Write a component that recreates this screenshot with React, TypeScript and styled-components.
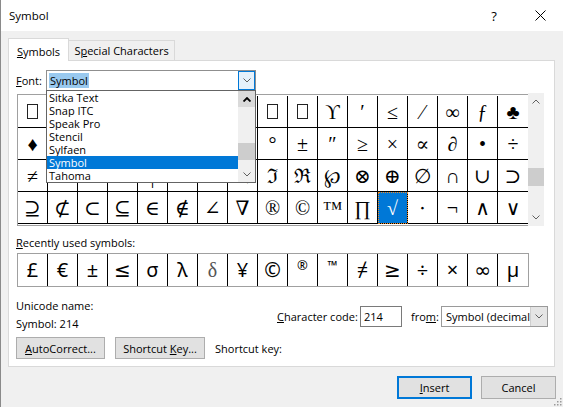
import React from "react";
import styled, { createGlobalStyle, css } from "styled-components";

const uiFont = `"Open Sans", "Noto Sans", "DejaVu Sans", sans-serif`;
const symbolFont = `"Liberation Serif", "DejaVu Serif", serif`;

const GlobalStyle = createGlobalStyle`
  html, body { margin: 0; padding: 0; background: #f0f0f0; }
  body { font-family: ${uiFont}; font-size: 11px; color: #000; }
  * { box-sizing: border-box; }
`;

// null = glyph missing from the font (drawn as an empty box)
const symbolRows: (string | null)[][] = [
  [null, null, null, null, null, null, null, null, null, null, "ϒ", "′", "≤", "⁄", "∞", "ƒ", "♣"],
  ["♦", "♥", "♠", "↔", "←", "↑", "→", "↓", "°", "±", "″", "≥", "×", "∝", "∂", "•", "÷"],
  ["≠", "≡", "≈", "…", "|", "—", "↵", "ℵ", "ℑ", "ℜ", "℘", "⊗", "⊕", "∅", "∩", "∪", "⊃"],
  ["⊇", "⊄", "⊂", "⊆", "∈", "∉", "∠", "∇", "®", "©", "™", "∏", "√", "⋅", "¬", "∧", "∨"],
];

const selected = { row: 3, col: 12 };

const fontList = ["Sitka Text", "Snap ITC", "Speak Pro", "Stencil", "Sylfaen", "Symbol", "Tahoma"];

const recent: { ch: string; kind?: "serif" | "raised" }[] = [
  { ch: "£" }, { ch: "€" }, { ch: "±" }, { ch: "≤" }, { ch: "σ" }, { ch: "λ" },
  { ch: "δ", kind: "serif" }, { ch: "¥" }, { ch: "©" }, { ch: "®", kind: "raised" },
  { ch: "™", kind: "raised" }, { ch: "≠" }, { ch: "≥" }, { ch: "÷" }, { ch: "×" },
  { ch: "∞" }, { ch: "µ" },
];

const Chevron = ({ up, bold }: { up?: boolean; bold?: boolean }) => (
  <svg width="8" height="5" viewBox="0 0 8 5">
    <polyline
      points={up ? "0.5,4.5 4,1 7.5,4.5" : "0.5,0.5 4,4 7.5,0.5"}
      fill="none"
      stroke={bold ? "#000" : "#606060"}
      strokeWidth={bold ? 1.8 : 1}
    />
  </svg>
);

export default function App() {
  return (
    <>
      <GlobalStyle />
      <Window>
        <TitleBar>
          <Title>Symbol</Title>
          <CaptionButton>?</CaptionButton>
          <CaptionButton>
            <svg width="11" height="11" viewBox="0 0 11 11">
              <path d="M0.5 0.5 L10.5 10.5 M10.5 0.5 L0.5 10.5" stroke="#000" strokeWidth="1" />
            </svg>
          </CaptionButton>
        </TitleBar>

        <Body>
          <TabStrip>
            <Tab $active>
              <span>
                <u>S</u>ymbols
              </span>
            </Tab>
            <Tab>
              <span>
                S<u>p</u>ecial Characters
              </span>
            </Tab>
          </TabStrip>

          <Panel>
            <FontRow>
              <FieldLabel>
                <u>F</u>ont:
              </FieldLabel>
              <ComboWrap>
                <Combo>
                  <ComboText>
                    <Highlight>Symbol</Highlight>
                  </ComboText>
                  <ComboButton>
                    <Chevron />
                  </ComboButton>
                </Combo>
                <DropList>
                  <DropItems>
                    {fontList.map((f) => (
                      <DropItem key={f} $active={f === "Symbol"}>
                        {f}
                      </DropItem>
                    ))}
                  </DropItems>
                  <ScrollBar $w={17}>
                    <ScrollArrow $h={16} $hover>
                      <Chevron up bold />
                    </ScrollArrow>
                    <Spacer $h={36} />
                    <ScrollThumb $h={17} />
                    <Spacer $grow />
                    <ScrollArrow $h={16}>
                      <Chevron />
                    </ScrollArrow>
                  </ScrollBar>
                </DropList>
              </ComboWrap>
            </FontRow>

            <GridArea>
              <SymbolGrid>
                {symbolRows.map((row, r) =>
                  row.map((ch, c) => (
                    <SymbolCell
                      key={`${r}-${c}`}
                      $selected={r === selected.row && c === selected.col}
                    >
                      {ch === null ? <MissingGlyph /> : ch}
                    </SymbolCell>
                  ))
                )}
              </SymbolGrid>
              <ScrollBar $w={16}>
                <ScrollArrow $h={17}>
                  <Chevron up />
                </ScrollArrow>
                <Spacer $h={58} />
                <ScrollThumb $h={18} />
                <Spacer $grow />
                <ScrollArrow $h={17}>
                  <Chevron />
                </ScrollArrow>
              </ScrollBar>
            </GridArea>

            <SectionLabel>
              <u>R</u>ecently used symbols:
            </SectionLabel>
            <RecentRow>
              {recent.map((s, i) => (
                <RecentCell key={i} $kind={s.kind}>
                  {s.ch}
                </RecentCell>
              ))}
            </RecentRow>

            <InfoRow>
              <InfoText>
                <div>Unicode name:</div>
                <div>Symbol: 214</div>
              </InfoText>
              <CodeGroup>
                <CodeLabel $w={83}>
                  <u>C</u>haracter code:
                </CodeLabel>
                <TextInput>214</TextInput>
                <CodeLabel $w={30} style={{ marginLeft: 9 }}>
                  fro<u>m</u>:
                </CodeLabel>
                <Select>
                  <SelectText>Symbol (decimal)</SelectText>
                  <SelectButton>
                    <Chevron />
                  </SelectButton>
                </Select>
              </CodeGroup>
            </InfoRow>

            <ButtonRow>
              <PushButton $w={89} $h={22}>
                <span>
                  <u>A</u>utoCorrect...
                </span>
              </PushButton>
              <PushButton $w={90} $h={22}>
                <span>
                  Shortcut <u>K</u>ey...
                </span>
              </PushButton>
              <span>Shortcut key:</span>
            </ButtonRow>
          </Panel>

          <Footer>
            <PushButton $w={75} $h={23} $primary>
              <span>
                <u>I</u>nsert
              </span>
            </PushButton>
            <PushButton $w={75} $h={23}>
              <span>Cancel</span>
            </PushButton>
          </Footer>
        </Body>

        <Grip width="10" height="10" viewBox="0 0 10 10">
          {[
            [8, 2], [8, 5], [8, 8], [5, 5], [5, 8], [2, 8],
          ].map(([x, y]) => (
            <rect key={`${x}${y}`} x={x} y={y} width="1.5" height="1.5" fill="#9a9a9a" />
          ))}
        </Grip>
      </Window>
    </>
  );
}

const Window = styled.div`
  position: relative;
  width: 563px;
  height: 407px;
  overflow: hidden;
  background: #f0f0f0;
  border-left: 1px solid #8a8a8a;
`;

const TitleBar = styled.div`
  display: flex;
  align-items: center;
  height: 31px;
  padding-left: 8px;
  background: #fff;
`;

const Title = styled.div`
  flex: 1;
  font-size: 11.5px;
`;

const CaptionButton = styled.div`
  display: flex;
  align-items: center;
  justify-content: center;
  width: 46px;
  height: 31px;
  font-size: 13px;
`;

const Body = styled.div`
  padding-left: 7px;
`;

const TabStrip = styled.div`
  display: flex;
  align-items: flex-end;
  height: 29px;
`;

const Tab = styled.div<{ $active?: boolean }>`
  position: relative;
  display: flex;
  align-items: center;
  justify-content: center;
  border: 1px solid #d9d9d9;
  border-bottom: none;
  white-space: nowrap;
  ${(p) =>
    p.$active
      ? css`
          z-index: 1;
          width: 61px;
          height: 23px;
          margin-bottom: -1px;
          padding-top: 2px;
          background: #fff;
        `
      : css`
          width: 107px;
          height: 20px;
          margin-left: -1px;
          background: #f0f0f0;
        `}
`;

const Panel = styled.div`
  width: 547px;
  height: 307px;
  background: #fff;
  border: 1px solid #d9d9d9;
`;

const FontRow = styled.div`
  display: flex;
  align-items: center;
  margin: 9px 0 0 7px;
  height: 21px;
`;

const FieldLabel = styled.div`
  width: 30px;
`;

const ComboWrap = styled.div`
  position: relative;
  width: 210px;
  height: 21px;
`;

const Combo = styled.div`
  display: flex;
  height: 21px;
  border: 1px solid #8f8f8f;
  background: #fff;
`;

const ComboText = styled.div`
  flex: 1;
  display: flex;
  align-items: center;
  padding-left: 2px;
`;

const Highlight = styled.span`
  background: #99c9ef;
  padding: 0 1px;
  line-height: 15px;
`;

const ComboButton = styled.div`
  display: flex;
  align-items: center;
  justify-content: center;
  width: 17px;
  border: 1px solid #0078d7;
  background: #e5f1fb;
`;

const DropList = styled.div`
  position: absolute;
  z-index: 5;
  left: 0;
  top: 20px;
  display: flex;
  width: 210px;
  height: 93px;
  border: 1px solid #646464;
  background: #fff;
`;

const DropItems = styled.div`
  flex: 1;
`;

const DropItem = styled.div<{ $active?: boolean }>`
  height: 13px;
  line-height: 13px;
  padding-left: 2px;
  white-space: nowrap;
  overflow: hidden;
  ${(p) =>
    p.$active &&
    css`
      background: #0078d7;
      color: #fff;
    `}
`;

const ScrollBar = styled.div<{ $w: number }>`
  display: flex;
  flex-direction: column;
  width: ${(p) => p.$w}px;
  background: #f0f0f0;
`;

const ScrollArrow = styled.div<{ $h: number; $hover?: boolean }>`
  display: flex;
  align-items: center;
  justify-content: center;
  height: ${(p) => p.$h}px;
  background: ${(p) => (p.$hover ? "#dadada" : "transparent")};
`;

const ScrollThumb = styled.div<{ $h: number }>`
  height: ${(p) => p.$h}px;
  background: #cdcdcd;
`;

const Spacer = styled.div<{ $h?: number; $grow?: boolean }>`
  height: ${(p) => (p.$h ? `${p.$h}px` : "auto")};
  flex: ${(p) => (p.$grow ? 1 : "none")};
`;

const GridArea = styled.div`
  display: flex;
  height: 133px;
  margin: 2px 0 0 8px;
`;

const SymbolGrid = styled.div`
  display: grid;
  grid-template-columns: repeat(17, 30px);
  grid-auto-rows: 32px;
  align-self: flex-start;
  margin: 1px -1px 0 0;
  padding: 1px 0;
  border: 1px solid #a0a0a0;
  background: #fff;
`;

const SymbolCell = styled.div<{ $selected?: boolean }>`
  display: flex;
  align-items: center;
  justify-content: center;
  border-right: 1px solid #000;
  border-bottom: 1px solid #000;
  font-family: ${symbolFont};
  font-size: 20px;
  line-height: 1;
  &:nth-child(17n) {
    border-right: none;
  }
  ${(p) =>
    p.$selected &&
    css`
      background: #0078d7;
      color: #fff;
      outline: 1px dotted #f08a24;
      outline-offset: -1px;
    `}
`;

const MissingGlyph = styled.span`
  display: block;
  width: 11px;
  height: 15px;
  border: 1px solid #222;
`;

const SectionLabel = styled.div`
  margin: 9px 0 0 7px;
  line-height: 16px;
`;

const RecentRow = styled.div`
  display: grid;
  grid-template-columns: repeat(17, 30px);
  width: 512px;
  height: 34px;
  margin: 2px 0 0 8px;
  border: 1px solid #a0a0a0;
`;

const RecentCell = styled.div<{ $kind?: "serif" | "raised" }>`
  display: flex;
  align-items: center;
  justify-content: center;
  border-right: 1px solid #000;
  font-family: "Noto Sans", "DejaVu Sans", sans-serif;
  font-size: 20px;
  line-height: 1;
  &:last-child {
    border-right: none;
  }
  ${(p) =>
    p.$kind === "serif" &&
    css`
      font-family: ${symbolFont};
      color: #555;
    `}
  ${(p) =>
    p.$kind === "raised" &&
    css`
      align-items: flex-start;
      padding-top: 5px;
      font-size: 13px;
    `}
`;

const InfoRow = styled.div`
  display: flex;
  margin-top: 10px;
  padding: 0 6px 0 7px;
`;

const InfoText = styled.div`
  line-height: 18px;
`;

const CodeGroup = styled.div`
  display: flex;
  align-items: center;
  height: 21px;
  margin: 9px 0 0 auto;
`;

const CodeLabel = styled.div<{ $w: number }>`
  width: ${(p) => p.$w}px;
  white-space: nowrap;
`;

const TextInput = styled.div`
  width: 42px;
  height: 21px;
  line-height: 19px;
  padding-left: 3px;
  border: 1px solid #7a7a7a;
`;

const Select = styled.div`
  display: flex;
  width: 107px;
  height: 21px;
  border: 1px solid #9a9a9a;
  overflow: hidden;
`;

const SelectText = styled.div`
  flex: 1;
  padding-left: 4px;
  line-height: 19px;
  white-space: nowrap;
  overflow: hidden;
`;

const SelectButton = styled.div`
  display: flex;
  align-items: center;
  justify-content: center;
  width: 17px;
  background: #e5e5e5;
  border-left: 1px solid #cfcfcf;
`;

const ButtonRow = styled.div`
  display: flex;
  align-items: center;
  gap: 10px;
  margin: 4px 0 0 7px;
`;

const PushButton = styled.div<{ $w: number; $h: number; $primary?: boolean }>`
  display: flex;
  align-items: center;
  justify-content: center;
  width: ${(p) => p.$w}px;
  height: ${(p) => p.$h}px;
  background: #e1e1e1;
  white-space: nowrap;
  border: ${(p) => (p.$primary ? "2px solid #0078d7" : "1px solid #adadad")};
`;

const Footer = styled.div`
  display: flex;
  justify-content: flex-end;
  gap: 9px;
  margin-top: 9px;
  padding-right: 7px;
`;

const Grip = styled.svg`
  position: absolute;
  right: 1px;
  bottom: 1px;
`;
